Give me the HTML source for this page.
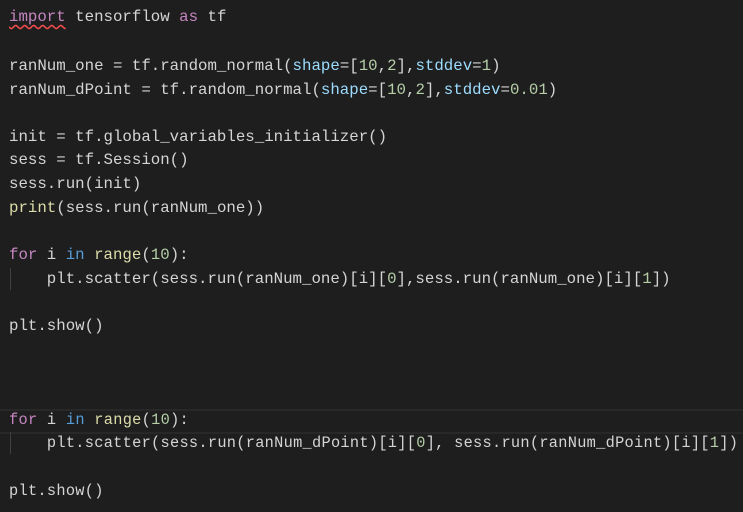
<!DOCTYPE html>
<html><head><style>
body{margin:0;background:#1e1e1e;width:743px;height:512px;overflow:hidden;position:relative}
.l{position:absolute;left:9px;white-space:pre;font-family:"Liberation Mono",monospace;font-size:15.75px;color:#d4d4d4;line-height:20px}
.k{color:#c586c0}.b{color:#569cd6}.f{color:#dcdcaa}.p{color:#9cdcfe}.n{color:#b5cea8}
.sq{text-decoration:underline wavy #f14c4c;text-underline-offset:3px}
.hl{position:absolute;left:0;width:743px;top:409px;height:21px;border-top:2px solid #282828;border-bottom:2px solid #282828}
.g{position:absolute;left:10px;width:1px;background:#404040}
.w{letter-spacing:0.29px;font-size:15.3px}
</style></head><body>
<div class="hl"></div>
<div class="g" style="top:268px;height:22px"></div>
<div class="g" style="top:432px;height:22px"></div>
<div class="l" style="top:7px"><span class="k sq">import</span> tensorflow <span class="k">as</span> tf</div>
<div class="l" style="top:56px">ranNum_one = tf.random_normal(<span class="p">shape</span>=[<span class="n">10</span>,<span class="n">2</span>],<span class="p">stddev</span>=<span class="n">1</span>)</div>
<div class="l" style="top:80px">ranNum_dPoint = tf.random_normal(<span class="p">shape</span>=[<span class="n">10</span>,<span class="n">2</span>],<span class="p">stddev</span>=<span class="n">0.01</span>)</div>
<div class="l" style="top:127px">init = tf.global_variables_initializer()</div>
<div class="l" style="top:150px">sess = tf.Session()</div>
<div class="l" style="top:174px">sess.run(init)</div>
<div class="l" style="top:198px"><span class="f">print</span>(sess.run(ranNum_one))</div>
<div class="l" style="top:245px"><span class="k">for</span> i <span class="b">in</span> <span class="f">range</span>(<span class="n">10</span>):</div>
<div class="l" style="top:269px">    plt.scatter(sess.run(ranNum_one)[i][<span class="n">0</span>],sess.run(ranNum_one)[i][<span class="n">1</span>])</div>
<div class="l" style="top:316px">plt.show()</div>
<div class="l w" style="top:410px"><span class="k">for</span> i <span class="b">in</span> <span class="f">range</span>(<span class="n">10</span>):</div>
<div class="l w" style="top:433px">    plt.scatter(sess.run(ranNum_dPoint)[i][<span class="n">0</span>], sess.run(ranNum_dPoint)[i][<span class="n">1</span>])</div>
<div class="l w" style="top:481px">plt.show()</div>
</body></html>
